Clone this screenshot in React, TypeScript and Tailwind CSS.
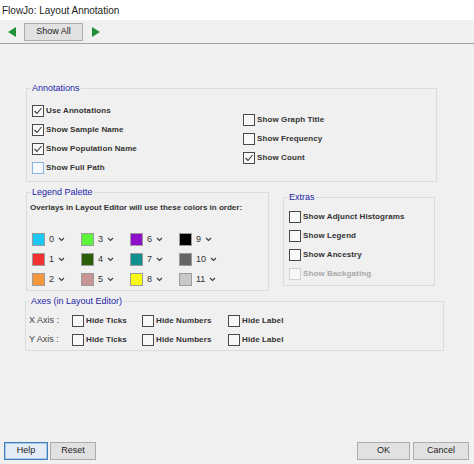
import React from 'react'

type BoxKind = 'normal' | 'focus' | 'disabled'

function CheckBox({ checked = false, kind = 'normal' }: { checked?: boolean; kind?: BoxKind }) {
  const border =
    kind === 'focus' ? 'border-[#8db6de] bg-[#f4f8fc]' : kind === 'disabled' ? 'border-[#d2d2d2] bg-[#f7f7f7]' : 'border-[#4a4a4a] bg-[#f8f8f8]'
  return (
    <span className={`w-[12px] h-[12px] border ${border} flex items-center justify-center shrink-0`}>
      {checked ? (
        <svg width="10" height="10" viewBox="0 0 10 10">
          <path d="M1.5 5 L4 7.5 L8.5 2" fill="none" stroke="#3a3a3a" strokeWidth="1.1" />
        </svg>
      ) : null}
    </span>
  )
}

function CheckRow({ label, checked, kind }: { label: string; checked?: boolean; kind?: BoxKind }) {
  return (
    <div className="h-[19px] flex items-center gap-[2px]">
      <CheckBox checked={checked} kind={kind} />
      <span className={`text-[8px] font-bold leading-none tracking-[0.1px] ${kind === 'disabled' ? 'text-[#a8a8a8]' : 'text-[#333]'}`}>{label}</span>
    </div>
  )
}

function GroupTitle({ children }: { children: React.ReactNode }) {
  return <legend className="ml-[4px] px-px text-[9px] leading-[12px] text-[#2424a8]">{children}</legend>
}

function Chevron() {
  return (
    <svg width="7" height="5" viewBox="0 0 7 5" className="ml-[4px]">
      <path d="M1 1 L3.5 3.5 L6 1" fill="none" stroke="#3a3a3a" strokeWidth="1.1" />
    </svg>
  )
}

const palette = [
  { n: 0, c: 'bg-[#1ec6f2]' },
  { n: 3, c: 'bg-[#5cf43a]' },
  { n: 6, c: 'bg-[#8e10c8]' },
  { n: 9, c: 'bg-[#000000]' },
  { n: 1, c: 'bg-[#f03232]' },
  { n: 4, c: 'bg-[#2d5e0a]' },
  { n: 7, c: 'bg-[#0e9090]' },
  { n: 10, c: 'bg-[#646464]' },
  { n: 2, c: 'bg-[#f5963c]' },
  { n: 5, c: 'bg-[#c89494]' },
  { n: 8, c: 'bg-[#f8f810]' },
  { n: 11, c: 'bg-[#c8c8c8]' },
]

function Btn({ label, w, focused }: { label: string; w: string; focused?: boolean }) {
  return (
    <button
      className={`${w} h-[18px] text-[9px] text-[#222] flex items-center justify-center border ${
        focused ? 'border-[#3d7ebf] bg-[#e4ecf5] shadow-[inset_0_0_0_1px_#a9c9e8]' : 'border-[#adadad] bg-[#e1e1e1]'
      }`}
    >
      {label}
    </button>
  )
}

export default function App() {
  return (
    <div className="w-[474px] h-[464px] bg-[#f0f0f0] flex flex-col" style={{ fontFamily: '"Liberation Sans", Arial, sans-serif' }}>
      <div className="h-[20px] bg-white flex items-center pl-[2px] text-[10px] text-[#222]">FlowJo: Layout Annotation</div>

      <div className="h-[24px] border-b border-[#a3a3a3] flex items-center">
        <svg width="8" height="10" viewBox="0 0 8 10" className="ml-[8px]">
          <path d="M8 0 L0 5 L8 10 Z" fill="#23913a" />
        </svg>
        <button className="ml-[8px] w-[59px] h-[18px] border border-[#adadad] bg-[#e1e1e1] text-[9px] text-[#222] flex items-center justify-center">
          Show All
        </button>
        <svg width="8" height="10" viewBox="0 0 8 10" className="ml-[9px]">
          <path d="M0 0 L8 5 L0 10 Z" fill="#23913a" />
        </svg>
      </div>

      <div className="flex-1 flex flex-col">
        <fieldset className="mt-[38px] ml-[26px] w-[411px] border border-[#dcdcdc]">
          <GroupTitle>Annotations</GroupTitle>
          <div className="h-[87px] pt-[3px] flex items-center pl-[5px]">
            <div className="w-[211px] flex flex-col">
              <CheckRow label="Use Annotations" checked />
              <CheckRow label="Show Sample Name" checked />
              <CheckRow label="Show Population Name" checked />
              <CheckRow label="Show Full Path" kind="focus" />
            </div>
            <div className="flex flex-col">
              <CheckRow label="Show Graph Title" />
              <CheckRow label="Show Frequency" />
              <CheckRow label="Show Count" checked />
            </div>
          </div>
        </fieldset>

        <div className="mt-[4px] flex items-center">
          <fieldset className="ml-[26px] w-[243px] border border-[#dcdcdc]">
            <GroupTitle>Legend Palette</GroupTitle>
            <div className="pt-[4px] pl-[3px] text-[8px] font-bold leading-[12px] text-[#333]">
              Overlays in Layout Editor will use these colors in order:
            </div>
            <div className="mt-[15px] mb-[1px] pl-[5px] grid grid-cols-[49px_49px_49px_49px]">
              {palette.map((p) => (
                <div key={p.n} className="h-[20px] flex items-center">
                  <span className={`w-[13px] h-[13px] border border-[#9c9c9c] ${p.c}`} />
                  <span className="ml-[4px] text-[9px] leading-none text-[#333]">{p.n}</span>
                  <Chevron />
                </div>
              ))}
            </div>
          </fieldset>

          <fieldset className="ml-[14px] w-[152px] border border-[#dcdcdc]">
            <GroupTitle>Extras</GroupTitle>
            <div className="pt-[4px] pb-[2px] pl-[5px] flex flex-col">
              <CheckRow label="Show Adjunct Histograms" />
              <CheckRow label="Show Legend" />
              <CheckRow label="Show Ancestry" />
              <CheckRow label="Show Backgating" kind="disabled" />
            </div>
          </fieldset>
        </div>

        <fieldset className="mt-[4px] ml-[25px] w-[419px] border border-[#dcdcdc]">
          <GroupTitle>Axes (in Layout Editor)</GroupTitle>
          <div className="pt-[4px] pb-[1px] flex flex-col">
            {['X Axis :', 'Y Axis :'].map((a) => (
              <div key={a} className="h-[19px] flex items-center">
                <span className="w-[46px] pl-[3px] text-[9px] text-[#444]">{a}</span>
                <div className="w-[70px]">
                  <CheckRow label="Hide Ticks" />
                </div>
                <div className="w-[86px]">
                  <CheckRow label="Hide Numbers" />
                </div>
                <CheckRow label="Hide Label" />
              </div>
            ))}
          </div>
        </fieldset>
      </div>

      <div className="h-[22px] pb-[4px] flex items-end justify-between px-[4px]">
        <div className="flex gap-[2px]">
          <Btn label="Help" w="w-[44px]" focused />
          <Btn label="Reset" w="w-[46px]" />
        </div>
        <div className="flex gap-[3px] pr-px">
          <Btn label="OK" w="w-[53px]" />
          <Btn label="Cancel" w="w-[56px]" />
        </div>
      </div>
    </div>
  )
}
